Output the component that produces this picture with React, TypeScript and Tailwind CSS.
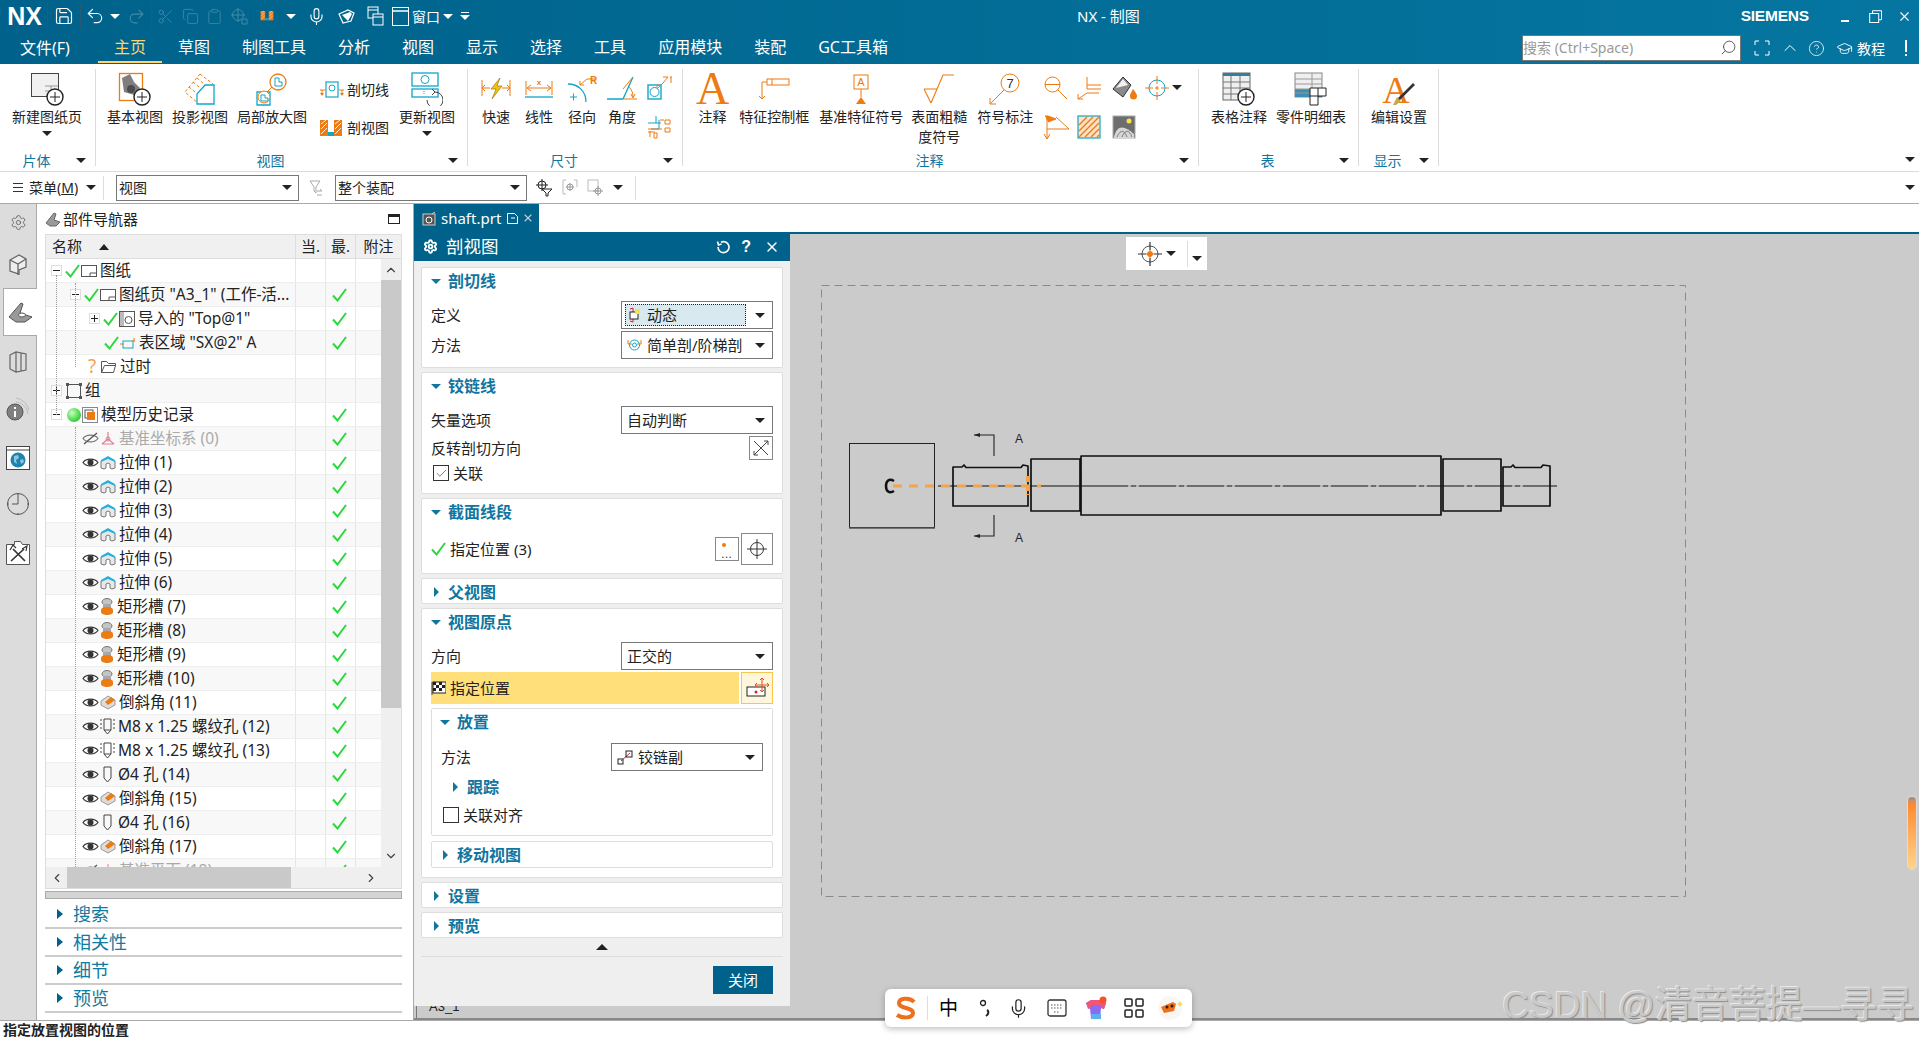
import type { ReactNode } from "react";
import {
  Check,
  ChevronDown,
  ChevronLeft,
  ChevronRight,
  ChevronUp,
  CircleHelp,
  Clipboard,
  Copy,
  GraduationCap,
  Mic,
  Redo2,
  Save,
  Scissors,
  Search,
  Settings,
  Undo2,
  X,
} from "lucide-react";

const OR = "#ee7b11";
const BL = "#12a5c8";

function Svg({ w, h, children, className }: { w: number; h: number; children: ReactNode; className?: string }) {
  return (
    <svg width={w} height={h} viewBox={`0 0 ${w} ${h}`} fill="none" className={className}>
      {children}
    </svg>
  );
}

function Tri({ white, className }: { white?: boolean; className?: string }) {
  return (
    <span
      className={`inline-block h-0 w-0 border-x-[5px] border-t-[5px] border-x-transparent ${white ? "border-t-white" : "border-t-[#222]"} ${className ?? ""}`}
    />
  );
}

function PlusBadge({ x, y }: { x: number; y: number }) {
  return (
    <g>
      <circle cx={x} cy={y} r="8" fill="#fff" stroke="#222" strokeWidth="1.4" />
      <path d={`M${x - 5} ${y}h10M${x} ${y - 5}v10`} stroke="#222" />
    </g>
  );
}

/* ---------- big ribbon icons ---------- */

function NewSheetIcon() {
  return (
    <Svg w={34} h={34}>
      <rect x="1.5" y="1.5" width="27" height="23" fill="#f1f1f1" stroke="#444" />
      <path d="M15 14h13M15 19h13M21 14v10" stroke="#999" />
      <PlusBadge x={25} y={25} />
    </Svg>
  );
}

function BaseViewIcon() {
  return (
    <Svg w={34} h={34}>
      <rect x="1.5" y="1.5" width="23" height="27" stroke={OR} strokeWidth="1.3" />
      <path d="M4 6l8-4 4 8 6 6-2 8-14-4z" fill="#7e7e7e" />
      <circle cx="13" cy="17" r="4" fill="#4c4c4c" />
      <PlusBadge x={24} y={25} />
    </Svg>
  );
}

function ProjectedIcon() {
  return (
    <Svg w={32} h={34}>
      <path d="M16 2L1 20l13 11M16 2l13 10M5 15l6 5M9 10l6 5M13 6l6 5" stroke={OR} strokeDasharray="3 2" />
      <path d="M13 32V22l8-9h9v19z" fill="#fff" stroke={BL} strokeWidth="1.3" />
    </Svg>
  );
}

function DetailIcon() {
  return (
    <Svg w={32} h={34}>
      <circle cx="22" cy="10" r="8" stroke={OR} strokeWidth="1.3" />
      <path d="M19 6h4v4h3v4h-7z" stroke={BL} />
      <path d="M16 15l-5 5" stroke={OR} />
      <path d="M1 20h13v13H1z" stroke={BL} strokeWidth="1.3" />
      <circle cx="8" cy="25" r="6" stroke={OR} fill="#fff" />
      <path d="M5 23h4v3h3v3H5z" stroke={BL} />
    </Svg>
  );
}

function UpdateViewIcon() {
  return (
    <Svg w={32} h={34}>
      <rect x="1" y="1" width="26" height="13" stroke={BL} strokeWidth="1.3" />
      <circle cx="14" cy="7.5" r="4" stroke={BL} />
      <rect x="1" y="17" width="26" height="8" stroke={BL} strokeWidth="1.3" />
      <path d="M13 19v4" stroke={BL} strokeDasharray="1 1" />
      <path d="M24 20a8 8 0 1 1-8 8" stroke="#444" />
      <path d="M21 17l3 3-3 3" stroke="#444" />
    </Svg>
  );
}

function SectionLineIcon() {
  return (
    <Svg w={26} h={18}>
      <rect x="7" y="1" width="12" height="15" stroke={BL} strokeWidth="1.2" />
      <circle cx="13" cy="7" r="3" stroke={BL} />
      <path d="M1 9h5M20 9h5M3 9v5M23 9v5" stroke={OR} />
      <path d="M1 12l2 3 2-3zM21 12l2 3 2-3z" fill={OR} />
    </Svg>
  );
}

function SectionViewIcon({ size = 24 }: { size?: number }) {
  return (
    <svg width={size} height={(size * 16) / 24} viewBox="0 0 24 16" fill="none">
      <rect x="1" y="0" width="8" height="16" fill={OR} />
      <rect x="15" y="0" width="8" height="16" fill={OR} />
      <path d="M2 4l5-4M2 9l6-6M2 14l6-6M16 4l5-4M16 9l6-6M16 14l6-6" stroke="#fff" strokeWidth=".9" />
      <rect x="9" y="12" width="6" height="4" fill={BL} />
    </svg>
  );
}

function QuickIcon() {
  return (
    <Svg w={30} h={24}>
      <path d="M1 3v16M29 3v16M2 11h7M21 11h7" stroke={OR} />
      <path d="M4 8l-3 3 3 3M26 8l3 3-3 3" stroke={OR} />
      <path d="M19 1l-9 11h5l-4 10 10-13h-5l3-8z" fill="#f2c011" stroke="#8a6d10" strokeWidth=".6" />
    </Svg>
  );
}

function LinearIcon() {
  return (
    <Svg w={30} h={24}>
      <path d="M2 4v14M28 4v14M3 11h24M7 8l-4 3 4 3M23 8l4 3-4 3" stroke={OR} />
      <text x="15" y="8" textAnchor="middle" fontSize="8" fontWeight="700" fill={OR} fontFamily="Liberation Sans">x</text>
      <path d="M1 20h28" stroke={BL} strokeWidth="1.3" />
    </Svg>
  );
}

function RadialIcon() {
  return (
    <Svg w={30} h={28}>
      <path d="M1 9c10 0 18 7 18 18" stroke={BL} strokeWidth="1.3" />
      <path d="M3 22h7M6.500 18.500v7" stroke={BL} />
      <path d="M13 10l7-6h8M13 6v4h4" stroke={OR} />
      <text x="23" y="9" fontSize="10" fontWeight="700" fill={OR} fontFamily="Liberation Sans">R</text>
    </Svg>
  );
}

function AngleIcon() {
  return (
    <Svg w={32} h={28}>
      <path d="M1 24h16L27 2" stroke={BL} strokeWidth="1.3" />
      <path d="M18 24h13M17 14L27 2" stroke={OR} />
      <path d="M23 12c3 3 4 6 4 10M25 19l2 4 2-4" stroke={OR} />
    </Svg>
  );
}

function CircleDimIcon() {
  return (
    <Svg w={26} h={25}>
      <rect x="1" y="9" width="13" height="14" stroke={BL} strokeWidth="1.4" />
      <circle cx="7.500" cy="16" r="4.500" stroke={BL} />
      <path d="M10 13l7-7M13 9h-3v3" stroke={OR} />
      <path d="M16 1h5l-5 6M23 1h2M24 1v6" stroke={OR} />
    </Svg>
  );
}

function AutoDimIcon() {
  return (
    <Svg w={26} h={24}>
      <path d="M4 14h8V5M9 1v7M1 8h13" stroke={BL} />
      <path d="M1 14h14M13 5h4M3 16v6M1 17h7M7 18h3v5H7zM18 5h5v4h-5zM18 13h5v4h-5z" stroke={OR} />
    </Svg>
  );
}

function FeatureFrameIcon() {
  return (
    <Svg w={32} h={22}>
      <path d="M4 21V4h5" stroke={OR} />
      <path d="M1 18l3 3 3-3" stroke={OR} />
      <rect x="9" y="1" width="22" height="6" stroke={OR} />
      <path d="M14 1v6" stroke={OR} />
    </Svg>
  );
}

function DatumIcon() {
  return (
    <Svg w={16} h={30}>
      <rect x="1" y="1" width="14" height="14" stroke={OR} />
      <text x="8" y="12" textAnchor="middle" fontSize="11" fill={OR} fontFamily="Liberation Sans">A</text>
      <path d="M8 15v8" stroke={OR} />
      <path d="M3 30l5-7 5 7z" fill={OR} />
    </Svg>
  );
}

function RoughIcon() {
  return (
    <Svg w={32} h={30}>
      <path d="M1 15h13L8 29 20 1h11" stroke={OR} strokeWidth="1.1" />
      <path d="M1 15l7 14" stroke={OR} strokeWidth="1.1" />
    </Svg>
  );
}

function BalloonIcon() {
  return (
    <Svg w={32} h={32}>
      <circle cx="21" cy="10" r="9" stroke={OR} />
      <text x="21" y="15" textAnchor="middle" fontSize="13" fill="#333" fontFamily="Liberation Sans">7</text>
      <path d="M15 17L1 31M1 25v6h6" stroke={OR} />
    </Svg>
  );
}

function NoteIcons() {
  return (
    <div className="ml-[10px] grid grid-cols-[34px_35px_33px_27px_auto] grid-rows-[39px_39px] items-center pt-[4px]">
      <Svg w={26} h={24}>
        <circle cx="9.500" cy="8.500" r="7.500" stroke={OR} />
        <path d="M2 8.500h15M15 14l9 9" stroke={OR} />
      </Svg>
      <Svg w={26} h={24}>
        <path d="M10 1v12h14M10 9h14M1 23l9-6h12M1 18v5h5" stroke={OR} />
      </Svg>
      <Svg w={26} h={24}>
        <path d="M1 13l10-12 8 8-8 12z" fill="#8a8a8a" stroke="#333" />
        <path d="M4 12l7-9 5 6z" fill="#f2f2f2" />
        <path d="M21 13c3 4 4 5 4 7a3.500 3.500 0 0 1-7 0c0-2 1-3 3-7z" fill={OR} />
      </Svg>
      <Svg w={24} h={24}>
        <circle cx="12" cy="12" r="8" stroke={BL} />
        <path d="M12 0v8M12 16v8M0 12h8M16 12h8M10 12h4M12 10v4" stroke={OR} />
      </Svg>
      <Tri />
      <Svg w={26} h={26}>
        <path d="M4 25V2M2 2h3l8 3-8 3" fill={OR} stroke={OR} />
        <path d="M4 15h22L13 3" stroke={OR} />
        <path d="M1 20l3 5 3-5" stroke={OR} />
      </Svg>
      <Svg w={24} h={24}>
        <rect x="1" y="1" width="22" height="22" fill="#fbe2c8" stroke={BL} strokeWidth="1.2" />
        <path d="M2 10l8-8M2 16L16 2M2 22L22 2M8 22L22 8M14 22l8-8M20 22l2-2" stroke={OR} strokeWidth="1.4" />
      </Svg>
      <Svg w={24} h={24}>
        <rect x="1" y="1" width="22" height="22" fill="#6e6e6e" stroke="#aaa" />
        <path d="M2 22c3-12 10-12 20-3v4H2z" fill="#d6d6d6" />
        <path d="M5 22c3-7 7-8 10 0M10 22c3-7 7-8 10 0" stroke="#777" />
        <circle cx="17" cy="6" r="2.500" fill="#f6e24a" />
      </Svg>
    </div>
  );
}

function TableNoteIcon() {
  return (
    <Svg w={34} h={34}>
      <rect x="1" y="1" width="27" height="27" fill="#efefef" stroke="#666" />
      <rect x="1" y="1" width="27" height="3" fill="#2f7f9f" />
      <path d="M1 10h27M1 16h27M1 22h27M9 4v24M18 4v24" stroke="#777" />
      <PlusBadge x={24} y={25} />
    </Svg>
  );
}

function PartListIcon() {
  return (
    <Svg w={34} h={34}>
      <rect x="1" y="1" width="27" height="24" fill="#efefef" stroke="#888" />
      <rect x="1" y="17" width="27" height="8" fill="#3f8db0" />
      <path d="M1 7h27M1 12h27M1 17h27M1 21h27M18 1v24" stroke="#999" />
      <path d="M16 16h16v8h-8v9h-8z" fill="#fff" stroke="#222" />
      <path d="M24 16v8M16 24h8" stroke="#222" />
    </Svg>
  );
}

function EditSettingsIcon() {
  return (
    <Svg w={34} h={34}>
      <text x="14" y="31" textAnchor="middle" fontSize="38" fontFamily="Liberation Serif" fill={OR}>A</text>
      <path d="M32 12L16 28" stroke="#333" strokeWidth="2.600" />
      <path d="M15 25l4 4-5 4h-3z" fill="#c9a94a" />
    </Svg>
  );
}

/* ---------- ribbon ---------- */

function RibbonBtn({ label, icon, dd, className }: { label: ReactNode; icon: ReactNode; dd?: boolean; className?: string }) {
  return (
    <div className={`flex shrink-0 flex-col items-center pt-[6px] ${className ?? ""}`}>
      <div className="flex h-[37px] items-center justify-center">{icon}</div>
      <div className="text-center text-[14px] leading-[20px] whitespace-nowrap text-[#222]">{label}</div>
      {dd && <Tri className="mt-[4px]" />}
    </div>
  );
}

function RibbonGroup({ title, children, className, pad }: { title?: string; children: ReactNode; className: string; pad: string }) {
  return (
    <div className={`flex shrink-0 flex-col ${className}`}>
      <div className={`flex h-[86px] ${pad}`}>{children}</div>
      <div className="flex h-[21px] items-center">
        <div className="flex-1 text-center text-[14px] leading-[20px] text-[#11769f]">{title}</div>
        <div className="flex w-[22px] justify-center pr-[6px]">
          <Tri />
        </div>
      </div>
    </div>
  );
}

function RibbonSep() {
  return <div className="my-[5px] w-px shrink-0 bg-[#dcdcdc]" />;
}

function Ribbon() {
  return (
    <div className="flex h-[108px] border-b border-[#dcdcdc] bg-white">
      <RibbonGroup title="片体" className="w-[95px]" pad="pl-[12px]">
        <RibbonBtn label="新建图纸页" icon={<NewSheetIcon />} dd />
      </RibbonGroup>
      <RibbonSep />
      <RibbonGroup title="视图" className="w-[371px]" pad="pl-[11px]">
        <RibbonBtn label="基本视图" icon={<BaseViewIcon />} />
        <RibbonBtn label="投影视图" icon={<ProjectedIcon />} className="ml-[9px]" />
        <RibbonBtn label="局部放大图" icon={<DetailIcon />} className="ml-[9px]" />
        <div className="ml-[12px] flex w-[70px] shrink-0 flex-col gap-[17px] pt-[15px] text-[14px] leading-[21px] whitespace-nowrap text-[#222]">
          <div className="flex items-center gap-[2px]">
            <SectionLineIcon />
            <span>剖切线</span>
          </div>
          <div className="flex items-center gap-[4px]">
            <SectionViewIcon />
            <span>剖视图</span>
          </div>
        </div>
        <RibbonBtn label="更新视图" icon={<UpdateViewIcon />} dd className="ml-[10px]" />
      </RibbonGroup>
      <RibbonSep />
      <RibbonGroup title="尺寸" className="w-[214px]" pad="pl-[13px]">
        <RibbonBtn label="快速" icon={<QuickIcon />} />
        <RibbonBtn label="线性" icon={<LinearIcon />} className="ml-[13px]" />
        <RibbonBtn label="径向" icon={<RadialIcon />} className="ml-[13px]" />
        <RibbonBtn label="角度" icon={<AngleIcon />} className="ml-[9px]" />
        <div className="ml-[9px] flex flex-col gap-[14px] pt-[12px]">
          <CircleDimIcon />
          <AutoDimIcon />
        </div>
      </RibbonGroup>
      <RibbonSep />
      <RibbonGroup title="注释" className="w-[515px]" pad="pl-[13px]">
        <RibbonBtn
          label="注释"
          icon={<span className="font-['Liberation_Serif'] text-[46px] leading-[37px] text-[#ee7b11]">A</span>}
        />
        <RibbonBtn label="特征控制框" icon={<FeatureFrameIcon />} className="ml-[10px]" />
        <RibbonBtn label="基准特征符号" icon={<DatumIcon />} className="ml-[10px]" />
        <RibbonBtn
          label={
            <>
              表面粗糙
              <br />
              度符号
            </>
          }
          icon={<RoughIcon />}
          className="ml-[8px]"
        />
        <RibbonBtn label="符号标注" icon={<BalloonIcon />} className="ml-[10px]" />
        <NoteIcons />
      </RibbonGroup>
      <RibbonSep />
      <RibbonGroup title="表" className="w-[159px]" pad="pl-[12px]">
        <RibbonBtn label="表格注释" icon={<TableNoteIcon />} />
        <RibbonBtn label="零件明细表" icon={<PartListIcon />} className="ml-[9px]" />
      </RibbonGroup>
      <RibbonSep />
      <RibbonGroup title="显示" className="w-[79px]" pad="pl-[12px]">
        <RibbonBtn label="编辑设置" icon={<EditSettingsIcon />} />
      </RibbonGroup>
      <RibbonSep />
      <div className="flex flex-1 items-end justify-end pr-[4px] pb-[9px]">
        <Tri />
      </div>
    </div>
  );
}

/* ---------- title + menu ---------- */

function QatSep() {
  return <div className="h-[26px] w-px shrink-0 bg-[#2a5a72]" />;
}

function Q({ className, children }: { className: string; children?: ReactNode }) {
  return <div className={`flex shrink-0 items-center justify-center ${className}`}>{children}</div>;
}

function TitleRow() {
  return (
    <div className="flex h-[32px] items-center text-white">
      <div className="flex w-[1077px] shrink-0 items-center">
        <Q className="w-[47px] pl-[2px] font-['Liberation_Sans'] text-[25px] leading-none font-bold">NX</Q>
        <QatSep />
        <Q className="w-[32px]">
          <Save size={20} strokeWidth={1.4} />
        </Q>
        <QatSep />
        <Q className="w-[27px]">
          <Undo2 size={20} strokeWidth={1.4} />
        </Q>
        <Q className="w-[14px]">
          <Tri white />
        </Q>
        <Q className="w-[29px] text-[#3f8ba8]">
          <Redo2 size={19} strokeWidth={1.4} />
        </Q>
        <QatSep />
        <Q className="w-[26px] text-[#3f8ba8]">
          <Scissors size={17} strokeWidth={1.2} />
        </Q>
        <Q className="w-[24px] text-[#3f8ba8]">
          <Copy size={17} strokeWidth={1.2} />
        </Q>
        <Q className="w-[24px] text-[#3f8ba8]">
          <Clipboard size={17} strokeWidth={1.2} />
        </Q>
        <Q className="w-[27px] text-[#3f8ba8]">
          <Svg w={17} h={17}>
            <circle cx="7" cy="7" r="5.500" stroke="#3f8ba8" />
            <path d="M7 0v14M0 7h14M11 11h5v5h-5z" stroke="#3f8ba8" />
          </Svg>
        </Q>
        <QatSep />
        <Q className="w-[26px]">
          <SectionViewIcon size={14} />
        </Q>
        <Q className="w-[21px]">
          <Tri white />
        </Q>
        <QatSep />
        <Q className="w-[29px]">
          <Mic size={19} strokeWidth={1.4} />
        </Q>
        <QatSep />
        <Q className="w-[29px]">
          <Svg w={17} h={15}>
            <path d="M1 5l9-4 6 3-3 8-8 2z" stroke="#fff" strokeWidth="1.200" />
            <path d="M4 6l8-3 2 2-4 7z" fill="#fff" />
          </Svg>
        </Q>
        <QatSep />
        <Q className="w-[26px]">
          <Svg w={17} h={20}>
            <rect x="1" y="1" width="10" height="11" stroke="#fff" />
            <path d="M1 4h10" stroke="#fff" />
            <rect x="6" y="8" width="10" height="11" fill="#046a93" stroke="#fff" />
            <path d="M6 11h10" stroke="#fff" />
          </Svg>
        </Q>
        <Q className="w-[24px]">
          <Svg w={17} h={19}>
            <rect x=".5" y=".5" width="16" height="18" stroke="#fff" />
            <path d="M1 4h15" stroke="#fff" strokeWidth="1.5" />
          </Svg>
        </Q>
        <Q className="w-[28px] text-[14px]">窗口</Q>
        <Q className="w-[16px]">
          <Tri white />
        </Q>
        <Q className="w-[18px] flex-col gap-[2px]">
          <span className="h-px w-[8px] bg-white" />
          <Tri white />
        </Q>
      </div>
      <div className="text-[15px] leading-none whitespace-nowrap">NX - 制图</div>
      <div className="ml-auto flex items-center pr-[7px]">
        <span className="mr-[32px] font-['Liberation_Sans'] text-[15.500px] font-bold tracking-[-0.2px]">SIEMENS</span>
        <span className="mt-[9px] mr-[20px] h-[2px] w-[8px] bg-white" />
        <Svg w={13} h={13} className="mr-[15px]">
          <rect x=".7" y="3.500" width="9" height="9" stroke="#fff" />
          <path d="M3.500 3V.7h9v9H10" stroke="#fff" />
        </Svg>
        <X size={15} strokeWidth={1.8} />
      </div>
    </div>
  );
}

const MENU = [
  { t: "主页", active: true },
  { t: "草图" },
  { t: "制图工具" },
  { t: "分析" },
  { t: "视图" },
  { t: "显示" },
  { t: "选择" },
  { t: "工具" },
  { t: "应用模块" },
  { t: "装配" },
  { t: "GC工具箱" },
];

function MenuRow() {
  return (
    <div className="flex h-[32px] items-center text-white">
      <div className="ml-[20px] w-[78px] shrink-0 text-[16px] leading-[30px] whitespace-nowrap">文件(F)</div>
      {MENU.map((m) => (
        <div
          key={m.t}
          className={`h-[30px] border-b-[2px] px-[16px] text-[16px] leading-[29px] whitespace-nowrap ${m.active ? "border-[#ffd36e] text-[#ffd36e]" : "border-transparent"}`}
        >
          {m.t}
        </div>
      ))}
      <div className="ml-auto flex items-center">
        <div className="-mt-[1px] flex h-[26px] w-[219px] items-center justify-between border border-[#777] bg-white pr-[3px] text-[14px] text-[#9a9a9a]">
          <span>搜索 (Ctrl+Space)</span>
          <Search size={17} strokeWidth={1.2} className="-scale-x-100 text-[#444]" />
        </div>
        <Svg w={16} h={16} className="ml-[13px]">
          <path d="M1 5V1h4M11 1h4v4M15 11v4h-4M5 15H1v-4" stroke="#fff" />
        </Svg>
        <ChevronUp size={20} strokeWidth={1.2} className="ml-[10px]" />
        <CircleHelp size={17} strokeWidth={1.1} className="ml-[8px]" />
        <GraduationCap size={17} strokeWidth={1.3} className="ml-[11px]" />
        <span className="ml-[4px] text-[14px]">教程</span>
        <span className="mr-[12px] ml-[20px] flex w-[2px] flex-col gap-[2px]">
          <span className="h-[12px] bg-white" />
          <span className="h-[2px] bg-white" />
        </span>
      </div>
    </div>
  );
}

/* ---------- selection bar ---------- */

function SelectBar({ text, className }: { text: string; className: string }) {
  return (
    <div className={`flex h-[26px] shrink-0 items-center justify-between border border-[#777] px-[2px] text-[14px] text-[#222] ${className}`}>
      <span>{text}</span>
      <Tri className="mr-[4px]" />
    </div>
  );
}

function SelectionBar() {
  return (
    <div className="flex h-[32px] items-center border-b border-[#aaa] bg-white text-[14px] text-[#222]">
      <div className="ml-[13px] flex w-[10px] flex-col gap-[3px]">
        <span className="h-px bg-[#333]" />
        <span className="h-px bg-[#333]" />
        <span className="h-px bg-[#333]" />
      </div>
      <span className="ml-[6px] w-[54px] whitespace-nowrap">
        菜单(<span className="underline">M</span>)
      </span>
      <Tri className="ml-[3px]" />
      <div className="ml-[7px] h-[24px] w-px bg-[#ddd]" />
      <SelectBar text="视图" className="ml-[12px] w-[183px]" />
      <Svg w={16} h={18} className="mx-[10px]">
        <path d="M1 2h10L7 8v6L5 12V8z" stroke="#aaa" />
        <path d="M8 12h5l-2-2M13 16H8" stroke="#aaa" />
      </Svg>
      <SelectBar text="整个装配" className="w-[192px]" />
      <Svg w={16} h={18} className="ml-[9px]">
        <circle cx="6" cy="6" r="4" stroke="#222" />
        <path d="M6 0v12M0 6h12" stroke="#222" />
        <path d="M6 10h10l-4 4v3h-2v-3z" fill="#fff" stroke="#222" />
      </Svg>
      <Svg w={16} h={18} className="ml-[10px]">
        <path d="M4 1H1v14h3M12 1h3v7" stroke="#bbb" />
        <circle cx="8" cy="8" r="3" stroke="#999" />
        <path d="M8 4v8M4 8h8" stroke="#999" />
      </Svg>
      <Svg w={18} h={18} className="ml-[9px]">
        <rect x="1" y="1" width="10" height="11" stroke="#bbb" />
        <circle cx="11" cy="12" r="3" stroke="#999" />
        <path d="M11 7v10M6 12h10" stroke="#999" />
      </Svg>
      <Tri className="ml-[8px]" />
      <div className="ml-[12px] h-[24px] w-px bg-[#ddd]" />
      <Tri className="mr-[4px] ml-auto" />
    </div>
  );
}

/* ---------- left rail ---------- */

function RailIcons() {
  const stroke = "#666";
  return (
    <div className="flex w-[37px] shrink-0 flex-col items-center border-r border-[#aaa] bg-[#dcdcdc]">
      <div className="flex h-[36px] w-full items-center justify-center">
        <Settings size={17} strokeWidth={1.1} className="text-[#555]" />
      </div>
      <div className="flex h-[48px] w-full items-center justify-center">
        <Svg w={18} h={24}>
          <path d="M1 8l9-5 7 4v8l-7 3v4l-9-3z" fill="#eee" stroke={stroke} strokeWidth="1.300" />
          <path d="M1 8l8 4 8-5M9 12v11" stroke={stroke} strokeWidth="1.300" />
        </Svg>
      </div>
      <div className="-mr-px ml-[3px] flex h-[48px] w-[35px] items-center justify-center border-y border-l border-[#aaa] bg-white">
        <Svg w={25} h={24}>
          <path d="M1 17l12-14 2 1-3 9 12 4-7 5H8z" fill="#999" stroke="#555" />
          <ellipse cx="14" cy="15" rx="3.500" ry="2" fill="#fff" stroke="#555" />
        </Svg>
      </div>
      <div className="flex h-[49px] w-full items-center justify-center">
        <Svg w={18} h={24}>
          <path d="M1 6l6-3 10 2v16l-10 2-6-3zM7 3v20M12 4v18" stroke={stroke} strokeWidth="1.200" />
        </Svg>
      </div>
      <div className="flex h-[49px] w-full items-center justify-center">
        <Svg w={24} h={26}>
          <circle cx="9" cy="15" r="8" fill="#808080" stroke="#555" />
          <path d="M8 14h2v6H8zM8 10h2v2H8z" fill="#fff" />
          <path d="M10 5a13 13 0 0 1 12 12M10 1a16 16 0 0 1 13 12" stroke="#bbb" />
        </Svg>
      </div>
      <div className="flex h-[47px] w-full items-center justify-center">
        <Svg w={24} h={24}>
          <rect x=".5" y=".5" width="23" height="23" fill="#fff" stroke="#444" />
          <path d="M1 4h22" stroke="#444" />
          <circle cx="12" cy="14" r="7.500" fill="#1f83ad" />
          <path d="M8 10l4-1 1 3-3 2 1 4-3-2zM14 14l3-1 1 3-3 2z" fill="#8ac6de" />
        </Svg>
      </div>
      <div className="flex h-[46px] w-full items-center justify-center">
        <Svg w={24} h={24}>
          <circle cx="12" cy="12" r="10.500" stroke="#555" />
          <path d="M12 3v9H6M12 1v2M12 21v2M1 12h2M21 12h2" stroke="#555" />
        </Svg>
      </div>
      <div className="flex h-[51px] w-full items-center justify-center">
        <Svg w={24} h={24}>
          <path d="M.5 3.500h8v-3h6l2 3h7v20H.5z" fill="#fff" stroke="#555" />
          <path d="M5 20L18 8M7 8l12 12" stroke="#333" strokeWidth="1.700" />
          <path d="M4 9l3-5 3 3M16 8l5-3-1 5" stroke="#333" strokeWidth="1.200" />
        </Svg>
      </div>
      <div className="flex-1" />
    </div>
  );
}

/* ---------- navigator ---------- */

function Expander({ open }: { open?: boolean }) {
  return (
    <span className="relative flex h-[11px] w-[11px] shrink-0 items-center justify-center border border-[#ddd] bg-white">
      <span className="h-px w-[7px] bg-[#222]" />
      {!open && <span className="absolute h-[7px] w-px bg-[#222]" />}
    </span>
  );
}

function Tick({ className }: { className?: string }) {
  return (
    <Svg w={15} h={14} className={`shrink-0 ${className ?? ""}`}>
      <path d="M1 7.500l4.500 5L14 1" stroke="#2fd63f" strokeWidth="2" />
    </Svg>
  );
}

function SheetGlyph() {
  return (
    <Svg w={16} h={12} className="shrink-0">
      <rect x=".5" y=".5" width="15" height="11" fill="#fff" stroke="#555" />
      <path d="M9 8h6M9 8v3" stroke="#555" />
    </Svg>
  );
}

function ExtrudeGlyph() {
  return (
    <Svg w={16} h={15} className="shrink-0">
      <path d="M1 6v7l3 1 2-1V9l2-1 2 1v4l2 1 3-1V6l-7-3z" fill="#e8e8e8" stroke="#777" />
      <path d="M1 5l7-4 7 4v2L8 4 1 7z" fill="#2fb0dc" />
    </Svg>
  );
}

function SlotGlyph() {
  return (
    <Svg w={14} h={17} className="shrink-0">
      <ellipse cx="7" cy="4" rx="5" ry="3.500" fill="#c4c4c4" stroke="#777" />
      <rect x="3" y="6" width="8" height="4" fill="#a8a8a8" />
      <path d="M1 12c0-2 2-3 6-3s6 1 6 3v2c0 2-3 3-6 3s-6-1-6-3z" fill={OR} />
    </Svg>
  );
}

function ChamferGlyph() {
  return (
    <Svg w={16} h={15} className="shrink-0">
      <path d="M1 6l7-5 7 4v5l-7 4-7-4z" fill="#ddd" stroke="#999" />
      <path d="M5 7l6-5 4 3-7 5z" fill={OR} />
    </Svg>
  );
}

function ThreadGlyph() {
  return (
    <Svg w={15} h={17} className="shrink-0">
      <path d="M4 1v11l3.500 4 3.500-4V1z" stroke="#444" />
      <path d="M1 1v2M1 5v2M1 9v2M14 1v2M14 5v2M14 9v2" stroke="#444" />
      <path d="M4 12h7" stroke="#444" />
    </Svg>
  );
}

function HoleGlyph() {
  return (
    <Svg w={15} h={17} className="shrink-0">
      <path d="M4 1h7v11l-3.500 4L4 12z" stroke="#444" />
    </Svg>
  );
}

function EyeGlyph({ hidden }: { hidden?: boolean }) {
  return (
    <Svg w={17} h={13} className="shrink-0">
      <path d="M1 6.500C4 2 13 2 16 6.500 13 11 4 11 1 6.500z" stroke={hidden ? "#777" : "#333"} strokeWidth="1.200" />
      {!hidden && <circle cx="8.500" cy="6.500" r="3" fill="#333" />}
      {hidden && <path d="M2 12L15 1" stroke="#555" strokeWidth="1.300" />}
    </Svg>
  );
}

type Row = {
  pad: string;
  exp?: "open" | "closed";
  tick?: boolean;
  lead?: ReactNode;
  icon?: ReactNode;
  text: string;
  done?: boolean;
  muted?: boolean;
};

const FEATURE: [string, ReactNode][] = [
  ["拉伸 (1)", <ExtrudeGlyph />],
  ["拉伸 (2)", <ExtrudeGlyph />],
  ["拉伸 (3)", <ExtrudeGlyph />],
  ["拉伸 (4)", <ExtrudeGlyph />],
  ["拉伸 (5)", <ExtrudeGlyph />],
  ["拉伸 (6)", <ExtrudeGlyph />],
  ["矩形槽 (7)", <SlotGlyph />],
  ["矩形槽 (8)", <SlotGlyph />],
  ["矩形槽 (9)", <SlotGlyph />],
  ["矩形槽 (10)", <SlotGlyph />],
  ["倒斜角 (11)", <ChamferGlyph />],
  ["M8 x 1.25 螺纹孔 (12)", <ThreadGlyph />],
  ["M8 x 1.25 螺纹孔 (13)", <ThreadGlyph />],
  ["Ø4 孔 (14)", <HoleGlyph />],
  ["倒斜角 (15)", <ChamferGlyph />],
  ["Ø4 孔 (16)", <HoleGlyph />],
  ["倒斜角 (17)", <ChamferGlyph />],
];

const ROWS: Row[] = [
  { pad: "pl-[5px]", exp: "open", tick: true, icon: <SheetGlyph />, text: "图纸" },
  { pad: "pl-[24px]", exp: "open", tick: true, icon: <SheetGlyph />, text: "图纸页 \"A3_1\" (工作-活...", done: true },
  {
    pad: "pl-[43px]",
    exp: "closed",
    tick: true,
    icon: (
      <Svg w={16} h={16} className="shrink-0">
        <rect x=".5" y=".5" width="15" height="15" stroke="#555" />
        <path d="M1 1h4v14H1z" fill="#bbb" />
        <circle cx="9.500" cy="9" r="3.500" fill="#fff" stroke="#555" />
      </Svg>
    ),
    text: "导入的 \"Top@1\"",
    done: true,
  },
  {
    pad: "pl-[56px]",
    tick: true,
    icon: (
      <Svg w={16} h={12} className="shrink-0">
        <rect x="3" y="4" width="10" height="7" stroke={BL} />
        <path d="M0 7h4M12 4h3M14 1v3" stroke={OR} />
      </Svg>
    ),
    text: "表区域 \"SX@2\" A",
    done: true,
  },
  {
    pad: "pl-[38px]",
    lead: <span className="w-[16px] text-center text-[19px] leading-none text-[#f6a34c]">?</span>,
    icon: (
      <Svg w={16} h={12} className="shrink-0">
        <path d="M.5 11.500V.5h5l2 2h7v2h-11l-3 7h12l2-7" stroke="#555" />
      </Svg>
    ),
    text: "过时",
  },
  {
    pad: "pl-[5px]",
    exp: "closed",
    icon: (
      <Svg w={16} h={16} className="ml-[3px] shrink-0">
        <rect x="1.500" y="1.500" width="13" height="13" stroke="#555" />
        <path d="M0 0h3v3H0zM13 0h3v3h-3zM0 13h3v3H0zM13 13h3v3h-3z" fill="#555" />
      </Svg>
    ),
    text: "组",
  },
  {
    pad: "pl-[5px]",
    exp: "open",
    lead: <span className="ml-[4px] h-[14px] w-[14px] shrink-0 rounded-full bg-[radial-gradient(circle_at_35%_35%,#c8ffc0,#34cf35_70%)]" />,
    icon: (
      <Svg w={16} h={16} className="shrink-0">
        <rect x=".5" y=".5" width="15" height="15" stroke="#888" />
        <rect x="3" y="3" width="8" height="8" stroke="#555" />
        <rect x="5" y="5" width="8" height="8" fill={OR} />
      </Svg>
    ),
    text: "模型历史记录",
    done: true,
  },
  {
    pad: "pl-[36px]",
    lead: <EyeGlyph hidden />,
    icon: (
      <Svg w={16} h={15} className="shrink-0">
        <path d="M8 1v7L2 13M8 8l6 5M2 13h12" stroke="#e27d96" strokeWidth="1.200" />
        <circle cx="8" cy="8" r="2" stroke="#e27d96" />
      </Svg>
    ),
    text: "基准坐标系 (0)",
    done: true,
    muted: true,
  },
  ...FEATURE.map(([text, icon]) => ({ pad: "pl-[36px]", lead: <EyeGlyph />, icon, text, done: true })),
  {
    pad: "pl-[36px]",
    lead: <EyeGlyph hidden />,
    icon: (
      <Svg w={16} h={15} className="shrink-0">
        <path d="M8 1v7L2 13M8 8l6 5" stroke="#e27d96" />
      </Svg>
    ),
    text: "基准平面 (18)",
    done: true,
    muted: true,
  },
];

function TreeRow({ row, index }: { row: Row; index: number }) {
  return (
    <div className={`flex h-[24px] border-b border-[#eee] ${index % 2 === 1 ? "bg-[#f8f8f8]" : "bg-white"}`}>
      <div className={`flex w-[250px] shrink-0 items-center gap-[1px] border-r border-[#e6e6e6] text-[15.500px] leading-none ${row.pad}`}>
        {row.exp && <Expander open={row.exp === "open"} />}
        {row.tick && <Tick className="ml-[2px]" />}
        {row.lead}
        {row.icon}
        <span className={`ml-[2px] whitespace-nowrap ${row.muted ? "text-[#aaa]" : "text-[#222]"}`}>{row.text}</span>
      </div>
      <div className="w-[30px] shrink-0 border-r border-[#e6e6e6]" />
      <div className="flex w-[30px] shrink-0 items-center justify-center border-r border-[#e6e6e6] pr-[3px]">{row.done && <Tick />}</div>
      <div className="flex-1" />
    </div>
  );
}

function Navigator() {
  return (
    <div className="flex w-[377px] shrink-0 flex-col border-r border-[#aaa] bg-white pr-[11px] pl-[8px]">
      <div className="flex h-[30px] items-center gap-[2px] text-[15px] leading-none text-[#222]">
        <Svg w={16} h={15}>
          <path d="M1 11L9 1l2 1-2 6 6 2-4 4H5z" fill="#999" stroke="#666" />
        </Svg>
        <span>部件导航器</span>
        <span className="mr-[2px] ml-auto h-[10px] w-[12px] border-[1.500px] border-t-[3px] border-[#222]" />
      </div>
      <div className="border border-[#ddd]">
        <div className="flex h-[24px] border-b border-[#ddd] bg-[#f0f0f0] text-[15px] leading-none text-[#222]">
          <div className="flex w-[250px] items-center border-r border-[#ddd] pl-[6px]">
            名称
            <span className="ml-[17px] h-0 w-0 border-x-[5px] border-b-[6px] border-x-transparent border-b-[#222]" />
          </div>
          <div className="flex w-[30px] items-center justify-center border-r border-[#ddd]">当.</div>
          <div className="flex w-[30px] items-center justify-center border-r border-[#ddd]">最.</div>
          <div className="flex flex-1 items-center justify-center">附注</div>
        </div>
        <div className="flex h-[608px] overflow-hidden">
          <div className="relative w-[335px] shrink-0">
            {ROWS.map((r, i) => (
              <TreeRow key={i} row={r} index={i} />
            ))}
            <div className="absolute top-[16px] left-[10px] h-[140px] border-l border-dotted border-[#999]" />
            <div className="absolute top-[24px] left-[29px] h-[84px] border-l border-dotted border-[#999]" />
            <div className="absolute top-[168px] left-[29px] h-[440px] border-l border-dotted border-[#999]" />
          </div>
          <div className="flex w-[21px] flex-col bg-[#efefef]">
            <div className="flex h-[21px] items-center justify-center">
              <ChevronUp size={14} strokeWidth={2} className="text-[#444]" />
            </div>
            <div className="h-[428px] bg-[#c9c9c9]" />
            <div className="flex flex-1 items-end justify-center pb-[4px]">
              <ChevronDown size={14} strokeWidth={2} className="text-[#444]" />
            </div>
          </div>
        </div>
        <div className="flex h-[21px] items-center bg-[#efefef]">
          <div className="flex w-[21px] justify-center">
            <ChevronLeft size={14} strokeWidth={2} className="text-[#444]" />
          </div>
          <div className="h-full w-[224px] bg-[#c9c9c9]" />
          <div className="flex flex-1 justify-end pr-[23px]">
            <ChevronRight size={14} strokeWidth={2} className="text-[#444]" />
          </div>
        </div>
      </div>
      <div className="mt-[2px] mb-[2px] h-[8px] border border-[#aaa] bg-[#d4d4d4]" />
      {["搜索", "相关性", "细节", "预览"].map((t) => (
        <div key={t} className="flex h-[28px] items-center gap-[10px] border-b-[2px] border-[#ccc] pl-[12px] text-[18px] leading-none text-[#117aa0]">
          <span className="h-0 w-0 border-y-[5px] border-l-[6px] border-y-transparent border-l-[#00628a]" />
          {t}
        </div>
      ))}
    </div>
  );
}

/* ---------- dialog ---------- */

function SecHead({ title, open, indent }: { title: string; open?: boolean; indent?: boolean }) {
  return (
    <div className={`flex h-[26px] items-center text-[16px] leading-none font-bold text-[#11769f] ${indent ? "pl-[8px]" : "pl-[9px]"}`}>
      <span className="flex w-[17px] shrink-0">
        {open ? (
          <span className="h-0 w-0 border-x-[5px] border-t-[5px] border-x-transparent border-t-[#11769f]" />
        ) : (
          <span className="ml-[3px] h-0 w-0 border-y-[5px] border-l-[5px] border-y-transparent border-l-[#11769f]" />
        )}
      </span>
      <span>{title}</span>
    </div>
  );
}

function Card({ className, children }: { className?: string; children: ReactNode }) {
  return <div className={`mx-[7px] mt-[4px] shrink-0 rounded-[2px] border border-[#ddd] bg-white ${className ?? ""}`}>{children}</div>;
}

function Dropdown({ icon, text, focus, className }: { icon?: ReactNode; text: string; focus?: boolean; className?: string }) {
  return (
    <div className={`flex h-[28px] w-[152px] shrink-0 items-center border border-[#777] bg-white pr-[7px] pl-[3px] text-[15px] leading-none whitespace-nowrap text-[#222] ${className ?? ""}`}>
      <div className={`flex h-[22px] flex-1 items-center gap-[5px] pl-[2px] ${focus ? "border border-dotted border-[#222] bg-[#d8e9ef]" : ""}`}>
        {icon}
        {text}
      </div>
      <Tri className="ml-[9px]" />
    </div>
  );
}

function Field({ label, children, className }: { label: string; children?: ReactNode; className?: string }) {
  return (
    <div className={`flex items-center justify-between pr-[9px] pl-[9px] text-[15px] leading-none text-[#222] ${className ?? ""}`}>
      <span>{label}</span>
      {children}
    </div>
  );
}

function Dialog() {
  return (
    <div className="flex h-full w-[376px] shrink-0 flex-col bg-[#cbcbcb]">
      <div className="flex h-[774px] shrink-0 flex-col bg-[#efefef]">
        <div className="flex h-[29px] shrink-0 items-center bg-[#00628a] pr-[10px] pl-[9px] text-white">
          <Settings size={15} strokeWidth={3} />
          <span className="ml-[8px] text-[17.500px] leading-none">剖视图</span>
          <Svg w={14} h={14} className="ml-auto">
            <path d="M2 7a5.500 5.500 0 1 0 3-4.800M1.500 1.500l1 3.500 3-1" stroke="#fff" strokeWidth="1.600" />
          </Svg>
          <span className="ml-[11px] font-['Liberation_Sans'] text-[16px] leading-none font-bold">?</span>
          <X size={16} strokeWidth={2.200} className="ml-[13px]" />
        </div>

        <Card className="mt-[6px] h-[101px]">
          <SecHead title="剖切线" open />
          <Field label="定义" className="mt-[7px]">
            <Dropdown
              focus
              text="动态"
              icon={
                <Svg w={14} h={16}>
                  <path d="M5 1v14M2 2l3-1M2 14l3 1" stroke="#d22" />
                  <rect x="2" y="5" width="8" height="7" fill="#fff" stroke="#222" />
                  <rect x="7" y="2" width="5" height="5" fill="#f6e24a" />
                </Svg>
              }
            />
          </Field>
          <Field label="方法" className="mt-[2px]">
            <Dropdown
              text="简单剖/阶梯剖"
              icon={
                <Svg w={15} h={12}>
                  <circle cx="7.500" cy="6" r="5" stroke={BL} />
                  <circle cx="7.500" cy="6" r="2" stroke={BL} />
                  <path d="M1 1v4h4M10 5h4V1" stroke={OR} />
                </Svg>
              }
            />
          </Field>
        </Card>

        <Card className="h-[122px]">
          <SecHead title="铰链线" open />
          <Field label="矢量选项" className="mt-[7px]">
            <Dropdown text="自动判断" />
          </Field>
          <Field label="反转剖切方向" className="mt-[2px]">
            <span className="flex h-[24px] w-[24px] items-center justify-center border border-[#888]">
              <Svg w={18} h={18}>
                <path d="M2 2l14 14M16 2L2 16M12 2h4v4M2 12v4h4" stroke="#444" />
              </Svg>
            </span>
          </Field>
          <div className="mt-[5px] flex items-center gap-[4px] pl-[11px] text-[15px] leading-none text-[#222]">
            <span className="flex h-[16px] w-[16px] items-center justify-center border border-[#333]">
              <Check size={13} strokeWidth={1.3} className="text-[#444]" />
            </span>
            关联
          </div>
        </Card>

        <Card className="h-[76px]">
          <SecHead title="截面线段" open />
          <div className="flex h-[48px] items-center pr-[9px] pl-[9px] text-[15px] leading-none text-[#222]">
            <Tick />
            <span className="ml-[4px]">指定位置 (3)</span>
            <span className="ml-auto flex h-[24px] w-[24px] flex-col items-center justify-center border border-[#888]">
              <span className="-ml-[6px] h-[4px] w-[4px] rounded-full bg-[#ee7b11]" />
              <span className="mt-[5px] text-[10px] leading-[4px] tracking-[1px]">...</span>
            </span>
            <span className="ml-[2px] flex h-[32px] w-[32px] items-center justify-center border border-[#888]">
              <Svg w={22} h={22}>
                <circle cx="11" cy="11" r="6.500" stroke="#333" />
                <path d="M11 1v20M1 11h20" stroke="#333" />
              </Svg>
            </span>
          </div>
        </Card>

        <Card className="h-[26px]">
          <SecHead title="父视图" />
        </Card>

        <Card className="h-[270px]">
          <SecHead title="视图原点" open />
          <Field label="方向" className="mt-[7px]">
            <Dropdown text="正交的" />
          </Field>
          <div className="mt-[2px] flex gap-[2px] pr-[9px] pl-[9px] text-[15px] leading-none text-[#222]">
            <div className="flex h-[32px] flex-1 items-center gap-[4px] bg-[#ffdf7a]">
              <Svg w={15} h={14}>
                <path d="M1 1v13" stroke="#444" />
                <rect x="2" y="1" width="13" height="11" fill="#fff" stroke="#222" />
                <path d="M2 1h3v3H2zM8 1h3v3H8zM5 4h3v3H5zM11 4h3v3h-3zM2 7h3v3H2zM8 7h3v3H8z" fill="#222" />
              </Svg>
              指定位置
            </div>
            <div className="flex h-[32px] w-[32px] items-center justify-center border border-[#f7c64f] bg-[#fff6dc]">
              <Svg w={24} h={22}>
                <rect x="2" y="10" width="18" height="9" fill="#fff" stroke="#222" />
                <circle cx="11" cy="15" r="1.500" fill="#d22" />
                <path d="M17 1v14M10 8h14M15 3l2-2 2 2M15 13l2 2 2-2M12 6l-2 2 2 2M22 6l2 2-2 2" stroke="#e0501a" />
              </Svg>
            </div>
          </div>
          <div className="mx-[9px] mt-[4px] h-[128px] rounded-[2px] border border-[#ddd]">
            <SecHead title="放置" open indent />
            <Field label="方法" className="mt-[8px]">
              <Dropdown
                text="铰链副"
                icon={
                  <Svg w={16} h={15}>
                    <rect x="1" y="9" width="5" height="5" stroke="#222" />
                    <path d="M4 11l9-8" stroke="#d22" />
                    <rect x="9" y="1" width="6" height="6" stroke="#222" />
                  </Svg>
                }
              />
            </Field>
            <div className="mt-[3px] pl-[10px]">
              <SecHead title="跟踪" indent />
            </div>
            <div className="mt-[7px] flex items-center gap-[4px] pl-[11px] text-[15px] leading-none text-[#222]">
              <span className="h-[16px] w-[16px] border border-[#333]" />
              关联对齐
            </div>
          </div>
          <div className="mx-[9px] mt-[5px] h-[27px] rounded-[2px] border border-[#ddd]">
            <SecHead title="移动视图" indent />
          </div>
        </Card>

        <Card className="h-[26px]">
          <SecHead title="设置" />
        </Card>
        <Card className="h-[26px]">
          <SecHead title="预览" />
        </Card>

        <div className="mx-[7px] flex h-[19px] shrink-0 items-center justify-center border-b border-[#ddd]">
          <span className="h-0 w-0 border-x-[6px] border-b-[6px] border-x-transparent border-b-[#222]" />
        </div>
        <div className="mt-[9px] mr-[17px] flex h-[28px] w-[60px] shrink-0 items-center justify-center self-end bg-[#00628a] text-[15px] leading-none text-white">关闭</div>
      </div>
      <div className="ml-[2px] flex-1 overflow-hidden border-l border-[#777] pl-[12px] font-['Liberation_Sans'] text-[13px] leading-[13px] text-[#222]">
        <div className="-mt-[6px]">A3_1</div>
      </div>
    </div>
  );
}

/* ---------- canvas ---------- */

function ShaftDrawing() {
  return (
    <svg className="absolute inset-0" width={1129} height={783} viewBox="790 234 1129 783" fill="none">
      <rect x="821.500" y="285.500" width="864" height="611" stroke="#8a8a8a" strokeDasharray="8 5" />
      <rect x="849.500" y="443.500" width="85" height="84" stroke="#222" />
      <path d="M849 528h86" stroke="#555" strokeWidth="1.500" />
      <path
        d="M953 506V467h9l2-2 2 2.500h55l2-2.500 5 1V506zM1031 461v-2h49v52h-49zM1081 456h360v59h-360zM1443 459h58v52h-58zM1503 506V467h8l2-2 2 2.500h26l2-2.500 7 1V506z"
        stroke="#111"
        strokeWidth="1.700"
        strokeLinejoin="round"
      />
      <path d="M938 486h619" stroke="#111" strokeWidth="1.100" />
      <path d="M1128 486h3M1136 486h3M1176 486h3M1184 486h3M1224 486h3M1232 486h3M1272 486h3M1280 486h3M1320 486h3M1328 486h3M1368 486h3M1376 486h3M1416 486h3M1424 486h3M1464 486h3M1472 486h3M1512 486h3M1520 486h3" stroke="#cbcbcb" strokeWidth="1.500" />
      <path d="M974 435h20v21M974 536h20v-21" stroke="#222" strokeWidth="1.100" />
      <path d="M980 433l-6 2 6 2zM980 534l-6 2 6 2z" fill="#222" />
      <text x="1019" y="443" textAnchor="middle" fontSize="12" fill="#222" fontFamily="Liberation Sans">A</text>
      <text x="1019" y="542" textAnchor="middle" fontSize="12" fill="#222" fontFamily="Liberation Sans">A</text>
      <path d="M894 481c-5-3-8 0-8 5s3 8 8 5" stroke="#111" strokeWidth="2.500" />
      <path d="M893 486h148" stroke="#f6a44c" strokeWidth="3" strokeDasharray="9 7" />
      <path d="M1028 476v19" stroke="#f6a44c" strokeWidth="4" strokeDasharray="6 3" />
    </svg>
  );
}

function Canvas() {
  return (
    <div className="relative min-w-0 flex-1 border-t-[2px] border-[#00628a] bg-[#cbcbcb]">
      <ShaftDrawing />
      <div className="absolute top-[3px] left-[336px] flex h-[33px] w-[81px] items-center bg-white">
        <Svg w={24} h={24} className="ml-[12px]">
          <circle cx="12" cy="12" r="8" stroke="#555" />
          <path d="M12 0v8M12 16v8M0 12h8M16 12h8" stroke="#333" strokeWidth="1.200" />
          <path d="M12 8l4 4-4 4-4-4z" fill={OR} />
        </Svg>
        <Tri className="ml-[4px]" />
        <span className="mr-[4px] ml-[11px] h-[26px] w-px bg-[#ddd]" />
        <Tri className="mt-[9px]" />
      </div>
      <div className="absolute top-[563px] right-[3px] h-[72px] w-[8px] rounded-[4px] bg-gradient-to-b from-[#8c8c8c] via-[#ff8a2a] via-[10%] to-[#ffd48a] ring-1 ring-[#ddd]" />
      <div className="absolute top-[755px] left-[95px] flex h-[38px] w-[307px] items-center rounded-[6px] bg-white shadow-[0_2px_6px_rgba(0,0,0,0.25)]">
        <Svg w={22} h={24} className="ml-[10px]">
          <path d="M19 6c-4-5-15-4-15 1 0 6 14 4 14 10 0 5-10 6-16 2" stroke="#ef6f1a" strokeWidth="4" />
        </Svg>
        <span className="mr-[11px] ml-[10px] h-[24px] w-px bg-[#ddd]" />
        <span className="text-[19px] leading-none text-black">中</span>
        <Svg w={12} h={20} className="ml-[21px]">
          <circle cx="4" cy="5" r="2.500" stroke="#222" strokeWidth="1.300" />
          <path d="M8 12c2 1 2 4-1 6" stroke="#222" strokeWidth="2" />
        </Svg>
        <Mic size={21} strokeWidth={1.4} className="ml-[17px] text-[#222]" />
        <Svg w={20} h={18} className="ml-[18px]">
          <rect x="1" y="1" width="18" height="16" rx="2" stroke="#333" strokeWidth="1.300" />
          <path d="M4 6h12M4 9h12M7 13h6" stroke="#555" strokeDasharray="1.500 1.500" />
        </Svg>
        <Svg w={22} h={24} className="ml-[18px]">
          <path d="M1 7l5-3h10l5 3-2 6-3-1-1 11H6L5 12l-2 1z" fill="#8a6cf0" />
          <path d="M1 7l5-3h10l5 3-2 6-3-1v-3H6v3l-2 1z" fill="#f0567a" />
          <path d="M6 18h10v5H6z" fill="#5db1f2" />
          <circle cx="18" cy="4" r="3.500" fill="#f4512c" />
        </Svg>
        <Svg w={20} h={20} className="ml-[17px]">
          <rect x="1" y="1" width="7" height="7" rx="1" stroke="#222" strokeWidth="1.500" />
          <rect x="12" y="1" width="7" height="7" rx="1" stroke="#222" strokeWidth="1.500" />
          <rect x="1" y="12" width="7" height="7" rx="1" stroke="#222" strokeWidth="1.500" />
          <rect x="12" y="12" width="7" height="7" rx="1" stroke="#222" strokeWidth="1.500" />
        </Svg>
        <Svg w={26} h={26} className="ml-[14px]">
          <circle cx="12" cy="13" r="12" fill="#faf6f2" />
          <path d="M3 12l12-5 3 2-2 7-10 2z" fill="#ef6f1a" />
          <circle cx="9" cy="12" r="1.500" fill="#222" />
          <circle cx="14" cy="11" r="1.500" fill="#222" />
          <path d="M22 6l1 2 2 1-2 1-1 2-1-2-2-1 2-1z" fill="#f6d64a" />
        </Svg>
      </div>
      <div className="pointer-events-none absolute right-[5px] bottom-[-6px] text-[37px] leading-none whitespace-nowrap text-[#c9c9c9] [text-shadow:1px_1px_1px_#8f8f8f,-1px_-1px_0_#e8e8e8] [font-family:'Liberation_Sans','Noto_Sans_CJK_SC',sans-serif]">
        CSDN @清音菩提—寻寻
      </div>
    </div>
  );
}

export default function App() {
  return (
    <div className="flex h-[1038px] w-[1919px] flex-col overflow-hidden bg-white [font-family:'Noto_Sans','Noto_Sans_CJK_SC',sans-serif]">
      <div className="bg-gradient-to-r from-[#00628a] to-[#0576a1]">
        <TitleRow />
        <MenuRow />
      </div>
      <Ribbon />
      <SelectionBar />
      <div className="flex min-h-0 flex-1">
        <RailIcons />
        <Navigator />
        <div className="flex min-w-0 flex-1 flex-col">
          <div className="flex h-[28px] shrink-0 bg-white">
            <div className="flex w-[125px] items-center bg-[#00628a] pl-[8px] text-[15px] leading-none text-white">
              <Svg w={16} h={15}>
                <rect x="1" y="3" width="12" height="11" stroke="#ccc" fill="#555" />
                <circle cx="7" cy="9" r="3" stroke="#fff" />
                <path d="M10 3l3-2" stroke="#ccc" />
              </Svg>
              <span className="ml-[3px]">shaft.prt</span>
              <Svg w={11} h={11} className="ml-[6px]">
                <path d="M.5.500h7l3 3v7H.5z" stroke="#fff" />
                <path d="M4 5h4" stroke="#fff" />
              </Svg>
              <X size={12} strokeWidth={2.200} className="ml-[4px] text-[#ccc]" />
            </div>
          </div>
          <div className="flex min-h-0 flex-1 border-b-[2px] border-[#888]">
            <Dialog />
            <Canvas />
          </div>
        </div>
      </div>
      <div className="h-[18px] shrink-0 border-t border-[#aaa] bg-white pl-[3px] text-[14px] leading-[18px] font-bold text-[#222]">指定放置视图的位置</div>
    </div>
  );
}
